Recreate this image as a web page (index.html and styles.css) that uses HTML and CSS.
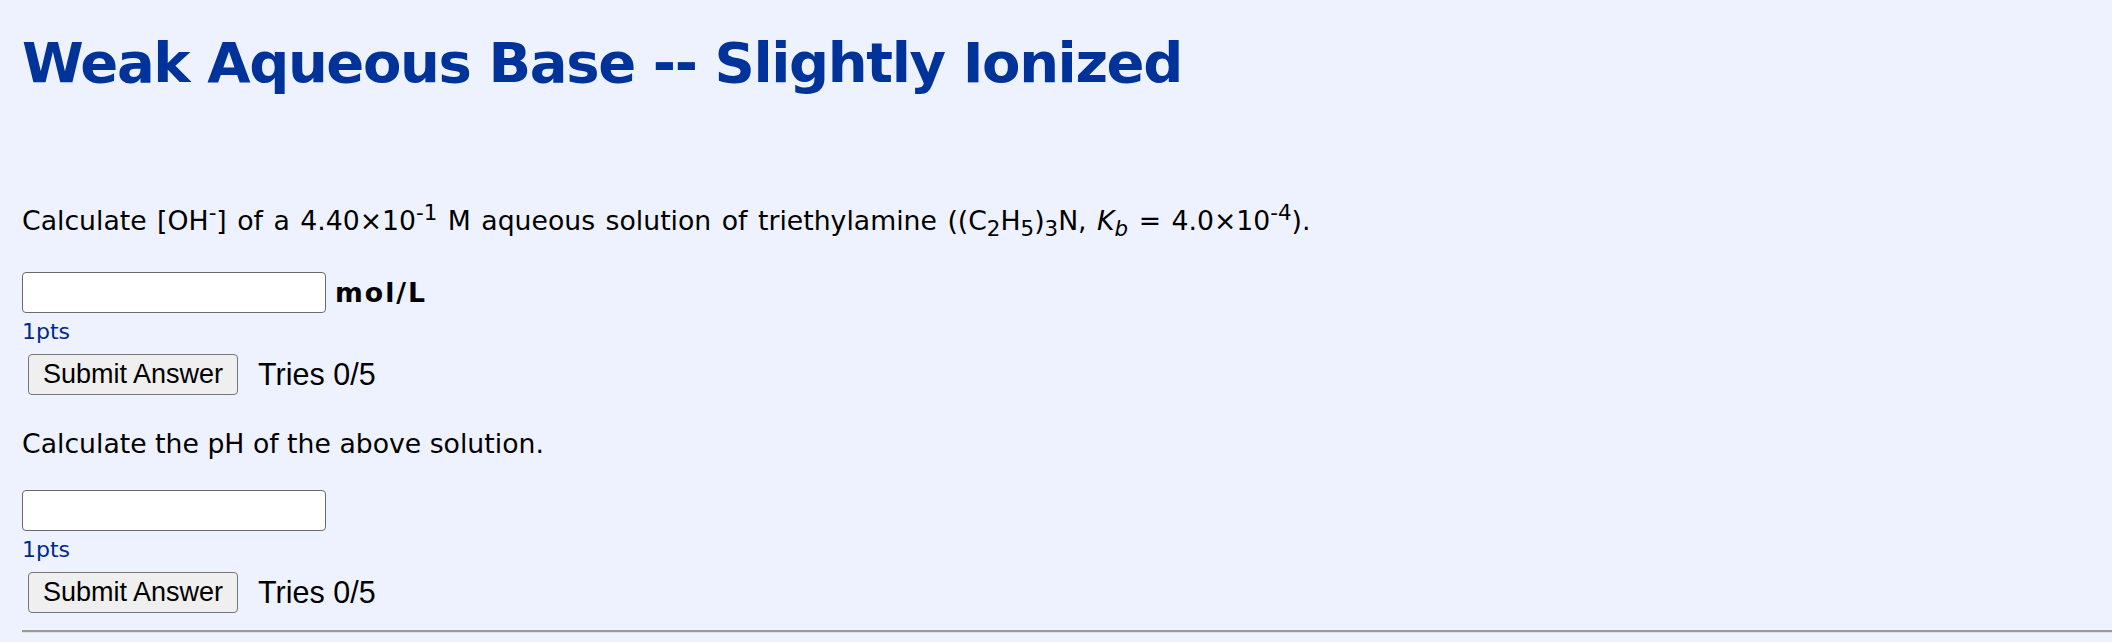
FILE: index.html
```html
<!DOCTYPE html>
<html lang="en">
<head>
    <meta charset="UTF-8" />
    <title>Weak Aqueous Base -- Slightly Ionized</title>
    <link rel="stylesheet" href="styles.css">
</head>
<body>

<h1 class="title">Weak Aqueous Base -- Slightly Ionized</h1>

<div class="question first">
    <p class="prompt">Calculate [OH<sup>-</sup>] of a 4.40&times;10<sup>-1</sup> M aqueous solution of triethylamine ((C<sub>2</sub>H<sub>5</sub>)<sub>3</sub>N, <i>K<sub>b</sub></i> = 4.0&times;10<sup>-4</sup>).</p>
    <div class="answer-row">
        <input type="text" class="answer" aria-label="Answer 1" />
        <span class="unit">mol/L</span>
    </div>
    <div class="pts">1pts</div>
    <div class="submit-row">
        <button class="submit">Submit Answer</button>
        <span class="tries">Tries 0/5</span>
    </div>
</div>

<div class="question second">
    <p class="prompt">Calculate the pH of the above solution.</p>
    <div class="answer-row">
        <input type="text" class="answer" aria-label="Answer 2" />
    </div>
    <div class="pts">1pts</div>
    <div class="submit-row">
        <button class="submit">Submit Answer</button>
        <span class="tries">Tries 0/5</span>
    </div>
</div>

<hr class="divider" />

</body>
</html>
```

FILE: styles.css
```css
body {
  background-color: #eef2fe;
  color: #000;
  font-family: "DejaVu Sans", Verdana, sans-serif;
  font-size: 26.7px;
  margin: 0;
  padding: 0 0 0 22px;
}
.title {
  color: #003399;
  font-size: 56px;
  font-weight: bold;
  letter-spacing: -1.4px;
  line-height: 64px;
  margin: 31px 0 0 0;
}
.prompt {
  margin: 0;
  line-height: 30px;
}
.first .prompt {
  margin-top: 111px;
  word-spacing: 2px;
}
.second {
  margin-top: 34px;
}
sup, sub {
  font-size: 0.8em;
  line-height: 0;
}
.answer-row {
  display: flex;
  align-items: center;
  gap: 9px;
  margin-top: 36px;
}
.second .answer-row {
  margin-top: 31px;
}
.answer {
  width: 304px;
  height: 41px;
  box-sizing: border-box;
  border: 1px solid #6a6a6a;
  border-radius: 4px;
  background: #fff;
  margin: 0;
  padding: 0 6px;
  font-size: 20px;
}
.unit {
  font-weight: bold;
  letter-spacing: 2px;
}
.pts {
  color: #00288f;
  font-size: 22px;
  line-height: 24px;
  margin-top: 7px;
}
.submit-row {
  display: flex;
  align-items: center;
  gap: 20px;
  margin-top: 10px;
  padding-left: 6px;
}
.submit {
  height: 41px;
  box-sizing: border-box;
  padding: 0 14px;
  font-family: "Liberation Sans", Arial, sans-serif;
  font-size: 27px;
  background: #efefef;
  color: #000;
  border: 1px solid #767676;
  border-radius: 4px;
}
.tries {
  font-family: "Liberation Sans", Arial, sans-serif;
  font-size: 30.5px;
}
.divider {
  margin: 17px 0 0 0;
  border: none;
  border-top: 2px solid #999a9c;
  border-bottom: 1px solid #e2e2e2;
  height: 0;
}
```
